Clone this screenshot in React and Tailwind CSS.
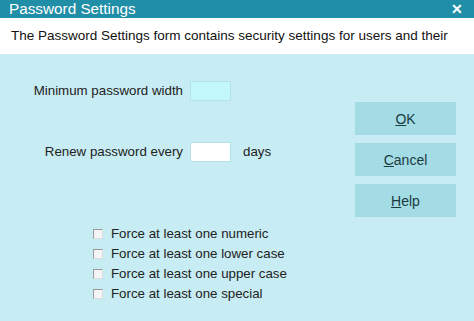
const checks = [
  'Force at least one numeric',
  'Force at least one lower case',
  'Force at least one upper case',
  'Force at least one special',
];

const buttons = [
  { key: 'O', rest: 'K' },
  { key: 'C', rest: 'ancel' },
  { key: 'H', rest: 'elp' },
];

export default function App() {
  return (
    <div className="w-[474px] h-[321px] flex flex-col overflow-hidden font-['Liberation_Sans',Arial,sans-serif] text-[13.3px] text-[#222]">
      <div className="h-[18px] bg-[#1f8ea6] flex items-center justify-between pl-[9px] pr-[11px] text-white">
        <span className="text-[15.3px] leading-none">Password Settings</span>
        <span className="text-[14px] font-bold leading-none">✕</span>
      </div>
      <div className="h-[36px] bg-white flex items-center px-[11px] text-[13.5px] text-[#111]">
        The Password Settings form contains security settings for users and their
      </div>
      <div className="flex-1 bg-[#c8ecf3] flex">
        <div className="flex flex-col pt-[27px]">
          <div className="flex items-center h-[20px]">
            <span className="w-[183px] text-right">Minimum password width</span>
            <span className="ml-[7px] w-[41px] h-[20px] bg-[#c2f8fc] border border-[#b3e2ea]" />
          </div>
          <div className="flex items-center h-[20px] mt-[41px]">
            <span className="w-[183px] text-right">Renew password every</span>
            <span className="ml-[7px] w-[41px] h-[20px] bg-white border border-[#b3e2ea]" />
            <span className="ml-[12px]">days</span>
          </div>
          <div className="flex flex-col mt-[62px] pl-[93px]">
            {checks.map((c) => (
              <div key={c} className="flex items-center h-[20px]">
                <span className="w-[10px] h-[10px] bg-[#f4f4f4] border border-[#9a9a9a] border-r-[#dcdcdc] border-b-[#dcdcdc]" />
                <span className="ml-[8px]">{c}</span>
              </div>
            ))}
          </div>
        </div>
        <div className="ml-auto mr-[18px] pt-[48px] flex flex-col gap-[8px]">
          {buttons.map((b) => (
            <div key={b.key} className="w-[101px] h-[33px] bg-[#a4dce6] flex items-center justify-center pt-[2px] text-[14px] text-[#1a3a40]">
              <span><span className="underline">{b.key}</span>{b.rest}</span>
            </div>
          ))}
        </div>
      </div>
    </div>
  );
}
